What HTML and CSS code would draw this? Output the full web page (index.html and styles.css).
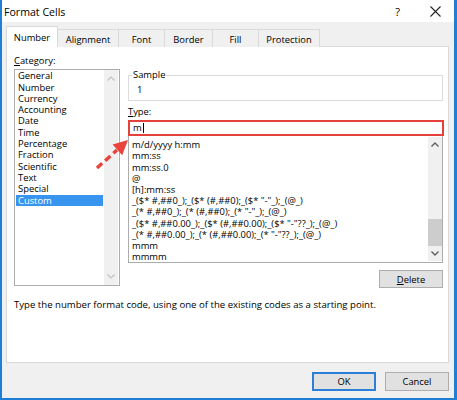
FILE: index.html
```html
<!DOCTYPE html>
<html>
<head>
<meta charset="utf-8">
<link rel="stylesheet" href="styles.css">
</head>
<body>
<div class="window">
  <div class="titlebar">
    <span class="title">Format Cells</span>
    <span class="help">?</span>
    <span class="close"><svg width="11" height="11" viewBox="0 0 11 11"><path d="M0.5 0.5 L10.5 10.5 M10.5 0.5 L0.5 10.5" stroke="#222" stroke-width="1.1" fill="none"/></svg></span>
  </div>
  <div class="body">
    <div class="tabs">
      <div class="tab active t-number">Number</div>
      <div class="tab t-align">Alignment</div>
      <div class="tab t-font">Font</div>
      <div class="tab t-border">Border</div>
      <div class="tab t-fill">Fill</div>
      <div class="tab t-prot">Protection</div>
    </div>
    <div class="panel">
      <div class="panel-main">
        <div class="cat-col">
          <div class="label"><u>C</u>ategory:</div>
          <div class="listbox cat-list">
            <ul class="items">
              <li>General</li>
              <li>Number</li>
              <li>Currency</li>
              <li>Accounting</li>
              <li>Date</li>
              <li>Time</li>
              <li>Percentage</li>
              <li>Fraction</li>
              <li>Scientific</li>
              <li>Text</li>
              <li>Special</li>
              <li class="selected">Custom</li>
            </ul>
            <div class="scrollbar cat-scroll">
              <svg class="arr" width="8" height="5" viewBox="0 0 8 5"><path d="M0.5 4.5 L4 1 L7.5 4.5" stroke="#c2c2c2" stroke-width="1.2" fill="none"/></svg>
              <svg class="arr" width="8" height="5" viewBox="0 0 8 5"><path d="M0.5 0.5 L4 4 L7.5 0.5" stroke="#c2c2c2" stroke-width="1.2" fill="none"/></svg>
            </div>
          </div>
        </div>
        <div class="right-col">
          <fieldset class="sample">
            <legend>Sample</legend>
            <div class="sample-val">1</div>
          </fieldset>
          <div class="label type-label"><u>T</u>ype:</div>
          <div class="type-input">m<span class="caret"></span></div>
          <div class="listbox fmt-list">
            <ul class="items">
              <li>m/d/yyyy h:mm</li>
              <li>mm:ss</li>
              <li>mm:ss.0</li>
              <li>@</li>
              <li>[h]:mm:ss</li>
              <li>_($* #,##0_);_($* (#,##0);_($* "-"_);_(@_)</li>
              <li>_(* #,##0_);_(* (#,##0);_(* "-"_);_(@_)</li>
              <li>_($* #,##0.00_);_($* (#,##0.00);_($* "-"??_);_(@_)</li>
              <li>_(* #,##0.00_);_(* (#,##0.00);_(* "-"??_);_(@_)</li>
              <li>mmm</li>
              <li>mmmm</li>
            </ul>
            <div class="scrollbar fmt-scroll">
              <svg class="arr" width="8" height="5" viewBox="0 0 8 5"><path d="M0.5 4.5 L4 1 L7.5 4.5" stroke="#606060" stroke-width="1.4" fill="none"/></svg>
              <div class="track"><div class="thumb"></div></div>
              <svg class="arr" width="8" height="5" viewBox="0 0 8 5"><path d="M0.5 0.5 L4 4 L7.5 0.5" stroke="#606060" stroke-width="1.4" fill="none"/></svg>
            </div>
          </div>
          <div class="delete-row"><div class="btn delete"><u>D</u>elete</div></div>
        </div>
      </div>
      <p class="desc">Type the number format code, using one of the existing codes as a starting point.</p>
    </div>
    <div class="footer">
      <div class="btn ok">OK</div>
      <div class="btn cancel">Cancel</div>
    </div>
  </div>
  <svg class="arrow" width="457" height="400" viewBox="0 0 457 400">
    <line x1="97" y1="168" x2="117" y2="150" stroke="#e8443c" stroke-width="3.4" stroke-dasharray="7 4"/>
    <polygon points="128,140 112.6,144.6 122.2,155.2" fill="#e8443c"/>
  </svg>
</div>
</body>
</html>
```
FILE: styles.css
```css
* { box-sizing: border-box; }
html, body { margin: 0; padding: 0; }
body {
  width: 457px;
  height: 400px;
  overflow: hidden;
  font-family: "Open Sans", "Noto Sans", sans-serif;
  font-size: 9.4px;
  color: #000;
  background: #fff;
}
.window {
  position: relative;
  width: 457px;
  height: 400px;
  border-left: 2px solid #1f7fd6;
  border-right: 3px solid #1f7fd6;
  border-bottom: 2px solid #1f7fd6;
  display: flex;
  flex-direction: column;
}
.titlebar {
  height: 22px;
  background: #fff;
  display: flex;
  align-items: center;
  padding-left: 2px;
}
.title { font-size: 10.6px; flex: 1; padding-top: 1px; }
.help { font-size: 11px; margin-right: 30px; padding-top: 1px; }
.close { width: 11px; height: 11px; margin-right: 13px; display: flex; }
.body {
  flex: 1;
  background: #f0f0f0;
  padding: 5px 5px 0 4px;
  display: flex;
  flex-direction: column;
}
.tabs {
  display: flex;
  align-items: flex-end;
  height: 20px;
  position: relative;
  z-index: 1;
  margin-bottom: -1px;
}
.tab {
  height: 18px;
  border: 1px solid #d9d9d9;
  border-bottom: none;
  margin-left: -1px;
  background: #f0f0f0;
  display: flex;
  align-items: center;
  justify-content: center;
  padding-top: 1px;
}
.tab.active {
  height: 21px;
  margin-left: 0;
  background: #fff;
  padding-top: 0;
  position: relative;
  z-index: 2;
}
.t-number { width: 52px; }
.t-align { width: 62px; }
.t-font { width: 47px; }
.t-border { width: 49px; }
.t-fill { width: 47px; }
.t-prot { width: 62px; }
.panel {
  height: 317px;
  background: #fff;
  border: 1px solid #d9d9d9;
  padding: 8px 5px 0 7px;
}
.panel-main { display: flex; }
.label { height: 12px; line-height: 12px; }
.label u { text-decoration-thickness: 1px; text-underline-offset: 1px; }
.cat-col { width: 106px; }
.cat-col .label { margin-bottom: 2px; }
.listbox {
  border: 1px solid #acacac;
  background: #fff;
  display: flex;
}
.items {
  list-style: none;
  margin: 0;
  padding: 0;
  flex: 1;
  overflow: hidden;
}
.items li { white-space: nowrap; }
.cat-list { height: 217px; }
.cat-list .items { padding: 0.3px 1px 0 1px; line-height: 11.3px; }
.cat-list .items li { padding-left: 2px; height: 11.3px; }
.cat-list .items li.selected { background: #3895ef; color: #fff; }
.scrollbar {
  width: 14px;
  background: #f0f0f0;
  display: flex;
  flex-direction: column;
  align-items: center;
  justify-content: space-between;
}
.cat-scroll { padding: 6px 0 6px; margin-right: 1px; }
.right-col {
  width: 315px;
  margin-left: 8px;
}
.sample {
  margin: 14px 0 0 0;
  padding: 3px 8px 4px 8px;
  border: 1px solid #dcdcdc;
  min-width: 0;
}
.sample legend {
  padding: 0 1px;
  margin-left: -5px;
  line-height: 12px;
  font-size: 9.4px;
}
.sample-val { line-height: 12px; }
.type-label { margin-top: 5px; }
.type-input {
  margin-top: 2px;
  height: 16px;
  border: 2px solid #e5403a;
  padding-left: 3px;
  line-height: 12px;
  display: flex;
  align-items: center;
  margin-right: -1px;
}
.caret {
  display: inline-block;
  width: 1px;
  height: 10px;
  background: #000;
  margin-left: 1px;
}
.fmt-list {
  height: 127px;
  border-top: none;
}
.fmt-list .items { padding: 3.2px 0 0 3px; line-height: 11.2px; }
.fmt-scroll { width: 14px; padding: 5px 0 5px; margin: 1px 0 1px 0; }
.fmt-scroll .track { flex: 1; width: 100%; position: relative; margin: 4px 0; }
.thumb {
  position: absolute;
  left: 0;
  right: 0;
  top: 68px;
  height: 27px;
  background: #cdcdcd;
}
.delete-row {
  display: flex;
  justify-content: flex-end;
  margin-top: 7px;
}
.btn {
  background: #e1e1e1;
  border: 1px solid #adadad;
  display: flex;
  align-items: center;
  justify-content: center;
  width: 64px;
  height: 19px;
}
.delete { height: 18px; }
.desc {
  margin: 11px 0 0 0;
  line-height: 12px;
  font-size: 9.6px;
}
.footer {
  display: flex;
  justify-content: flex-end;
  gap: 9px;
  margin-top: 9px;
}
.ok { border: 2px solid #2b7fd6; }
.arrow {
  position: absolute;
  left: -2px;
  top: 0;
  pointer-events: none;
}
```
